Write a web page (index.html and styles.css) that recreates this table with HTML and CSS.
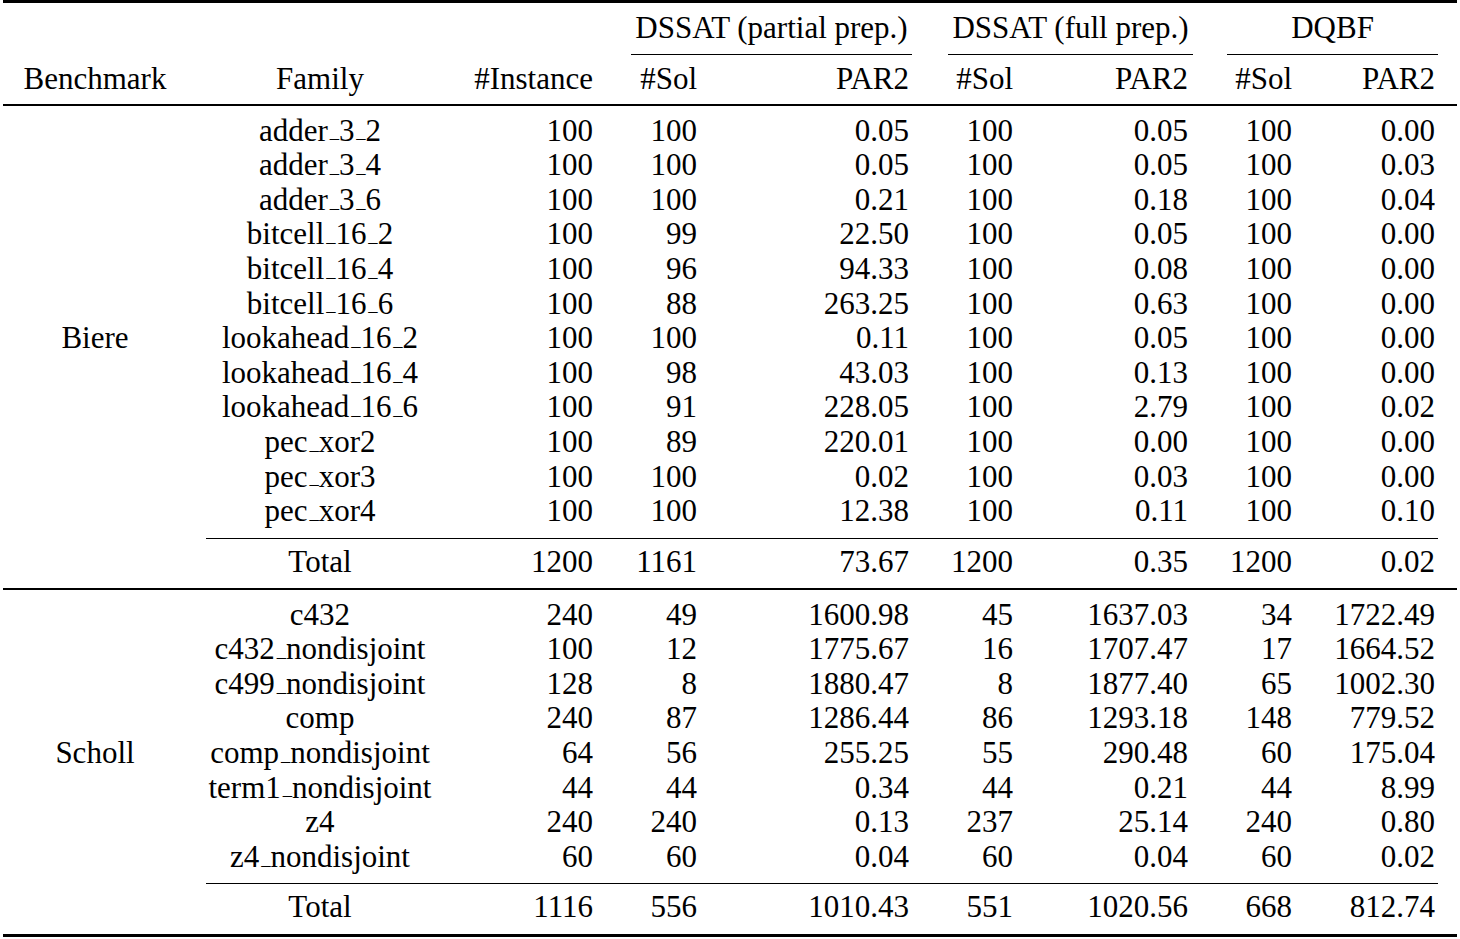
FILE: index.html
```html
<!DOCTYPE html>
<html>
<head>
<meta charset="utf-8">
<link rel="stylesheet" href="styles.css">
</head>
<body>
<table class="tbl">
  <colgroup>
    <col class="c1"><col class="c2"><col class="c3"><col class="c4"><col class="c5"><col class="c6"><col class="c7"><col class="c8"><col class="c9">
  </colgroup>
  <thead>
    <tr class="h1">
      <th></th><th></th><th></th>
      <th colspan="2"><div class="grp g1">DSSAT (partial prep.)</div></th>
      <th colspan="2"><div class="grp g2">DSSAT (full prep.)</div></th>
      <th colspan="2"><div class="grp g3">DQBF</div></th>
    </tr>
    <tr class="h2">
      <th class="ctr">Benchmark</th><th class="ctr">Family</th><th class="num">#Instance</th>
      <th class="num">#Sol</th><th class="num">PAR2</th>
      <th class="num">#Sol</th><th class="num">PAR2</th>
      <th class="num">#Sol</th><th class="num last">PAR2</th>
    </tr>
  </thead>
  <tbody>
    <tr class="first"><td></td><td class="ctr">adder<span class="us">_</span>3<span class="us">_</span>2</td><td class="num">100</td><td class="num">100</td><td class="num">0.05</td><td class="num">100</td><td class="num">0.05</td><td class="num">100</td><td class="num last">0.00</td></tr>
    <tr><td></td><td class="ctr">adder<span class="us">_</span>3<span class="us">_</span>4</td><td class="num">100</td><td class="num">100</td><td class="num">0.05</td><td class="num">100</td><td class="num">0.05</td><td class="num">100</td><td class="num last">0.03</td></tr>
    <tr><td></td><td class="ctr">adder<span class="us">_</span>3<span class="us">_</span>6</td><td class="num">100</td><td class="num">100</td><td class="num">0.21</td><td class="num">100</td><td class="num">0.18</td><td class="num">100</td><td class="num last">0.04</td></tr>
    <tr><td></td><td class="ctr">bitcell<span class="us">_</span>16<span class="us">_</span>2</td><td class="num">100</td><td class="num">99</td><td class="num">22.50</td><td class="num">100</td><td class="num">0.05</td><td class="num">100</td><td class="num last">0.00</td></tr>
    <tr><td></td><td class="ctr">bitcell<span class="us">_</span>16<span class="us">_</span>4</td><td class="num">100</td><td class="num">96</td><td class="num">94.33</td><td class="num">100</td><td class="num">0.08</td><td class="num">100</td><td class="num last">0.00</td></tr>
    <tr><td></td><td class="ctr">bitcell<span class="us">_</span>16<span class="us">_</span>6</td><td class="num">100</td><td class="num">88</td><td class="num">263.25</td><td class="num">100</td><td class="num">0.63</td><td class="num">100</td><td class="num last">0.00</td></tr>
    <tr><td class="ctr">Biere</td><td class="ctr">lookahead<span class="us">_</span>16<span class="us">_</span>2</td><td class="num">100</td><td class="num">100</td><td class="num">0.11</td><td class="num">100</td><td class="num">0.05</td><td class="num">100</td><td class="num last">0.00</td></tr>
    <tr><td></td><td class="ctr">lookahead<span class="us">_</span>16<span class="us">_</span>4</td><td class="num">100</td><td class="num">98</td><td class="num">43.03</td><td class="num">100</td><td class="num">0.13</td><td class="num">100</td><td class="num last">0.00</td></tr>
    <tr><td></td><td class="ctr">lookahead<span class="us">_</span>16<span class="us">_</span>6</td><td class="num">100</td><td class="num">91</td><td class="num">228.05</td><td class="num">100</td><td class="num">2.79</td><td class="num">100</td><td class="num last">0.02</td></tr>
    <tr><td></td><td class="ctr">pec<span class="us">_</span>xor2</td><td class="num">100</td><td class="num">89</td><td class="num">220.01</td><td class="num">100</td><td class="num">0.00</td><td class="num">100</td><td class="num last">0.00</td></tr>
    <tr><td></td><td class="ctr">pec<span class="us">_</span>xor3</td><td class="num">100</td><td class="num">100</td><td class="num">0.02</td><td class="num">100</td><td class="num">0.03</td><td class="num">100</td><td class="num last">0.00</td></tr>
    <tr><td></td><td class="ctr">pec<span class="us">_</span>xor4</td><td class="num">100</td><td class="num">100</td><td class="num">12.38</td><td class="num">100</td><td class="num">0.11</td><td class="num">100</td><td class="num last">0.10</td></tr>
    <tr class="cmid"><td></td><td colspan="8"><div class="cm"></div></td></tr>
    <tr class="total"><td></td><td class="ctr">Total</td><td class="num">1200</td><td class="num">1161</td><td class="num">73.67</td><td class="num">1200</td><td class="num">0.35</td><td class="num">1200</td><td class="num last">0.02</td></tr>

    <tr class="first"><td></td><td class="ctr">c432</td><td class="num">240</td><td class="num">49</td><td class="num">1600.98</td><td class="num">45</td><td class="num">1637.03</td><td class="num">34</td><td class="num last">1722.49</td></tr>
    <tr><td></td><td class="ctr">c432<span class="us">_</span>nondisjoint</td><td class="num">100</td><td class="num">12</td><td class="num">1775.67</td><td class="num">16</td><td class="num">1707.47</td><td class="num">17</td><td class="num last">1664.52</td></tr>
    <tr><td></td><td class="ctr">c499<span class="us">_</span>nondisjoint</td><td class="num">128</td><td class="num">8</td><td class="num">1880.47</td><td class="num">8</td><td class="num">1877.40</td><td class="num">65</td><td class="num last">1002.30</td></tr>
    <tr><td></td><td class="ctr">comp</td><td class="num">240</td><td class="num">87</td><td class="num">1286.44</td><td class="num">86</td><td class="num">1293.18</td><td class="num">148</td><td class="num last">779.52</td></tr>
    <tr><td class="ctr">Scholl</td><td class="ctr">comp<span class="us">_</span>nondisjoint</td><td class="num">64</td><td class="num">56</td><td class="num">255.25</td><td class="num">55</td><td class="num">290.48</td><td class="num">60</td><td class="num last">175.04</td></tr>
    <tr><td></td><td class="ctr">term1<span class="us">_</span>nondisjoint</td><td class="num">44</td><td class="num">44</td><td class="num">0.34</td><td class="num">44</td><td class="num">0.21</td><td class="num">44</td><td class="num last">8.99</td></tr>
    <tr><td></td><td class="ctr">z4</td><td class="num">240</td><td class="num">240</td><td class="num">0.13</td><td class="num">237</td><td class="num">25.14</td><td class="num">240</td><td class="num last">0.80</td></tr>
    <tr><td></td><td class="ctr">z4<span class="us">_</span>nondisjoint</td><td class="num">60</td><td class="num">60</td><td class="num">0.04</td><td class="num">60</td><td class="num">0.04</td><td class="num">60</td><td class="num last">0.02</td></tr>
    <tr class="cmid"><td></td><td colspan="8"><div class="cm"></div></td></tr>
    <tr class="total final"><td></td><td class="ctr">Total</td><td class="num">1116</td><td class="num">556</td><td class="num">1010.43</td><td class="num">551</td><td class="num">1020.56</td><td class="num">668</td><td class="num last">812.74</td></tr>
  </tbody>
</table>
</body>
</html>
```

FILE: styles.css
```css
html, body {
  margin: 0;
  padding: 0;
  background: #fff;
}

body {
  font-family: "Liberation Serif", "Times New Roman", serif;
  font-size: 31px;
  line-height: 34.6px;
  color: #000;
}

.tbl {
  margin-left: 3px;
  width: 1454px;
  table-layout: fixed;
  border-collapse: separate;
  border-spacing: 0;
}

.c1 { width: 184px; }
.c2 { width: 266px; }
.c3 { width: 157px; }
.c4 { width: 104px; }
.c5 { width: 212px; }
.c6 { width: 104px; }
.c7 { width: 175px; }
.c8 { width: 104px; }
.c9 { width: 148px; }

th, td {
  padding: 0;
  font-weight: normal;
  white-space: nowrap;
  vertical-align: top;
}

.ctr { text-align: center; }
.num { text-align: right; padding-right: 17px; }
.num.last { padding-right: 22px; }

/* header row 1 */
.h1 th {
  border-top: 3px solid #000;
  padding-top: 8px;
}

.grp {
  text-align: center;
  padding-bottom: 8.4px;
  border-bottom: 1px solid #000;
}
.g1 { margin: 0 14px 0 21px; }
.g2 { margin: 0 12px 0 22px; }
.g3 { margin: 0 19px 0 22px; }

/* header row 2 */
.h2 th {
  padding-top: 7px;
  padding-bottom: 7.4px;
  border-bottom: 2px solid #000;
}

tr.first td { padding-top: 7.7px; }

tr.cmid td { line-height: 0; }
.cm {
  margin: 9px 19px 6px 19px;
  border-top: 1px solid #000;
  height: 0;
}

tr.total td {
  padding-bottom: 8.5px;
  border-bottom: 2px solid #000;
}
tr.total.final td {
  padding-bottom: 9px;
  border-bottom: 3px solid #000;
}

.us {
  font-size: 0.6em;
  line-height: 1;
  vertical-align: 0.12em;
  margin-left: 0.1em;
}
```
